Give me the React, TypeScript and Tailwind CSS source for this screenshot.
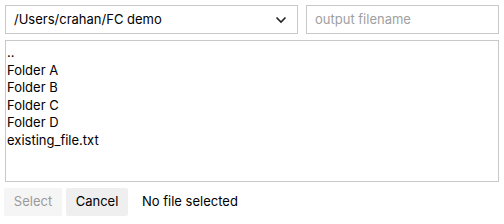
import React from 'react';

const entries = ['..', 'Folder A', 'Folder B', 'Folder C', 'Folder D', 'existing_file.txt'];

const FilePicker: React.FC = () => {
  return (
    <div className="w-[504px] h-[224px] bg-white px-[5px] pt-[5px] text-[13px] text-black font-['Inter','Liberation_Sans',sans-serif]">
      <div className="flex gap-[8px] h-[29px]">
        <div className="flex flex-shrink-0 items-center w-[293px] border border-[#c8c8c8] pl-[8px] pr-[10px]">
          <span className="flex-grow truncate">/Users/crahan/FC demo</span>
          <svg width="12" height="8" viewBox="0 0 12 8" className="flex-shrink-0">
            <path d="M1.5 1.5 L6 6 L10.5 1.5" fill="none" stroke="#222" strokeWidth="1.6" />
          </svg>
        </div>
        <input
          className="flex-grow min-w-0 w-full border border-[#c8c8c8] px-[8px] outline-none placeholder:text-[#a0a0a0]"
          placeholder="output filename"
        />
      </div>

      <div className="mt-[6px] h-[142px] border border-[#c8c8c8] pt-[3px] pl-[1px] leading-[17.5px]">
        {entries.map((e) => (
          <div key={e}>{e}</div>
        ))}
      </div>

      <div className="flex items-center mt-[6px] -ml-[1px]">
        <button className="h-[28px] w-[58px] bg-[#f5f5f5] text-[#9a9a9a] rounded-[2px]">Select</button>
        <button className="h-[28px] w-[62px] ml-[4px] bg-[#efefef] text-black rounded-[2px]">Cancel</button>
        <span className="ml-[14px]">No file selected</span>
      </div>
    </div>
  );
};

export default function App() {
  return <FilePicker />;
}
